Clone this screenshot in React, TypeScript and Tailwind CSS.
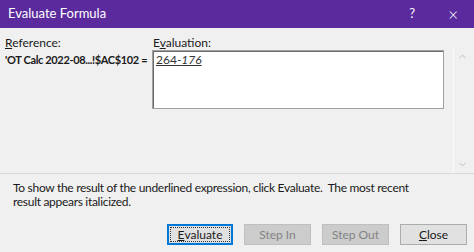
import { ChevronUp, ChevronDown } from 'lucide-react';

const font = "font-['Lato','Segoe_UI','Open_Sans',sans-serif]";

function DialogButton({
  label,
  hotkey,
  disabled,
  focused,
}: {
  label: string;
  hotkey?: number;
  disabled?: boolean;
  focused?: boolean;
}) {
  const text =
    hotkey === undefined ? (
      label
    ) : (
      <>
        {label.slice(0, hotkey)}
        <span className="underline">{label[hotkey]}</span>
        {label.slice(hotkey + 1)}
      </>
    );

  if (focused) {
    return (
      <div className="flex h-[21px] w-[66px] items-center justify-center border-2 border-[#0078d7] bg-[#e1e1e1] p-[1px]">
        <div className="flex h-full w-full items-center justify-center border border-dotted border-[#333] text-[12px] text-[#1a1a1a]">
          {text}
        </div>
      </div>
    );
  }

  return (
    <div
      className={
        disabled
          ? 'flex h-[21px] w-[67px] items-center justify-center border border-[#bfbfbf] bg-[#cccccc] text-[12px] text-[#838383]'
          : 'flex h-[21px] w-[67px] items-center justify-center border border-[#adadad] bg-[#e1e1e1] text-[12px] text-[#1a1a1a]'
      }
    >
      {text}
    </div>
  );
}

export default function App() {
  return (
    <div className={`flex h-[252px] w-[474px] flex-col overflow-hidden bg-[#f0f0f0] ${font}`}>
      {/* title bar */}
      <div className="flex h-[28px] items-center bg-[#5b2b9e] pl-[8px] text-[13px] text-white">
        <span>Evaluate Formula</span>
        <span className="ml-auto mr-[33px] text-[13px]">?</span>
        <span className="mr-[16px] text-[17px] leading-none font-light">×</span>
      </div>

      {/* body */}
      <div className="flex h-[146px] border-b border-[#d9d9d9]">
        <div className="w-[152px] shrink-0 pl-[5px] pt-[7px] text-[12px] text-[#1a1a1a]">
          <div className="leading-[15px]">
            <span className="underline">R</span>eference:
          </div>
          <div className="mt-[2px] whitespace-nowrap text-[11px] font-bold leading-[15px] tracking-[-0.35px]">
            'OT Calc 2022-08...!$AC$102 =
          </div>
        </div>
        <div className="pt-[7px] text-[12px] text-[#1a1a1a]">
          <div className="pl-[1px] leading-[15px]">
            E<span className="underline">v</span>aluation:
          </div>
          <div className="h-[59px] w-[292px] border border-[#a0a0a0] bg-white shadow-[inset_1px_1px_0_#6d6d6d]">
            <div className="px-[3px] pt-[1px] leading-[15px] text-[#333]">
              <span className="underline">
                264-<i>176</i>
              </span>
            </div>
          </div>
        </div>
        <div className="ml-auto mr-[4px] mt-[20px] flex w-[17px] flex-col items-center justify-between border-l border-[#fafafa] pb-[3px] pt-[3px]">
          <ChevronUp size={11} strokeWidth={1.5} className="text-[#a6a6a6]" />
          <ChevronDown size={11} strokeWidth={1.5} className="text-[#a6a6a6]" />
        </div>
      </div>

      {/* help text */}
      <div className="px-[13px] pt-[7px] text-[12px] leading-[14px] tracking-[-0.3px] text-[#1a1a1a]">
        <p>To show the result of the underlined expression, click Evaluate.&nbsp; The most recent</p>
        <p>result appears italicized.</p>
      </div>

      {/* buttons */}
      <div className="mt-auto mb-[7px] flex justify-end gap-[11px] pr-[7px]">
        <DialogButton label="Evaluate" hotkey={0} focused />
        <DialogButton label="Step In" disabled />
        <DialogButton label="Step Out" disabled />
        <DialogButton label="Close" hotkey={0} />
      </div>
    </div>
  );
}
